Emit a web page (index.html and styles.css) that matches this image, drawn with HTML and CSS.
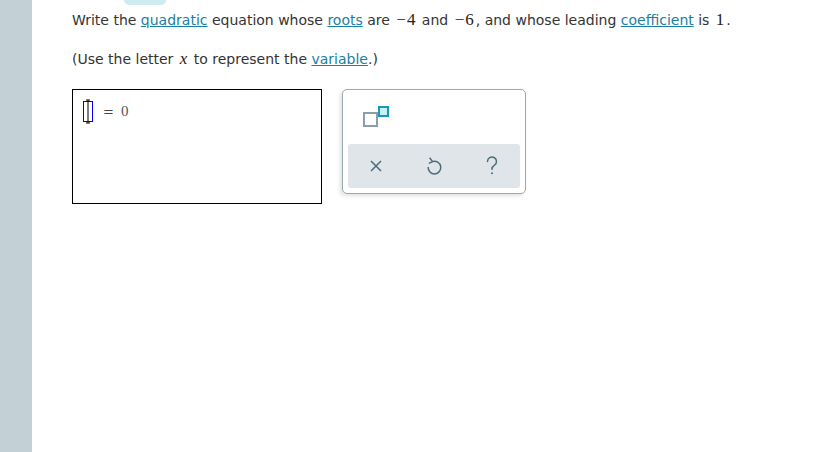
FILE: index.html
```html
<!DOCTYPE html>
<html>
<head>
<meta charset="utf-8">
<link rel="stylesheet" href="styles.css">
</head>
<body>
<div class="page">
  <aside class="side"></aside>
  <main class="main">
    <div class="tab"></div>
    <p class="q">Write the <a href="#">quadratic</a> equation whose <a href="#">roots</a> are <span class="m">−4</span> and <span class="m">−6</span>, and whose leading <a href="#">coefficient</a> is <span class="m">1</span>.</p>
    <p class="q q2">(Use the letter <span class="m mi">x</span> to represent the <a href="#">variable</a>.)</p>
    <div class="answer">
      <div class="input">
        <svg class="caret" width="12" height="26" viewBox="0 0 12 26">
          <rect x="1.5" y="3.5" width="9" height="20" fill="none" stroke="#0000ff" stroke-width="1"/>
          <path d="M6 2v23M4 2h4M4 25h4" stroke="#000" stroke-width="1" fill="none"/>
        </svg>
        <span class="eq">= <span class="zero">0</span></span>
      </div>
      <div class="palette">
        <div class="tools">
          <svg width="28" height="24" viewBox="0 0 28 24">
            <rect x="2" y="8" width="13" height="13" fill="#fff" stroke="#8a9ea6" stroke-width="2"/>
            <rect x="17" y="2" width="9" height="9" fill="#c9eef5" stroke="#1798b3" stroke-width="2"/>
          </svg>
        </div>
        <div class="bar">
          <button class="btn" aria-label="Clear"><svg width="14" height="14" viewBox="0 0 14 14"><path d="M2 2L12 12M12 2L2 12" stroke="#4e6c77" stroke-width="1.5" fill="none"/></svg></button>
          <button class="btn" aria-label="Undo"><svg width="18" height="20" viewBox="0 0 18 20"><path d="M7.5 5.6 A6.3 6.3 0 1 1 3.2 11" stroke="#4e6c77" stroke-width="1.5" fill="none"/><path d="M4.6 1.8L7.6 5.6L3.8 7.4" stroke="#4e6c77" stroke-width="1.5" fill="none" stroke-linejoin="round"/></svg></button>
          <button class="btn" aria-label="Help"><svg width="16" height="22" viewBox="0 0 16 22"><path d="M3.5 6.5 A4.5 4.5 0 1 1 10.5 10.2 C8.8 11.2 8 12 8 14.2" stroke="#4e6c77" stroke-width="1.5" fill="none" stroke-linecap="round"/><circle cx="8" cy="18.2" r="1" fill="#4e6c77"/></svg></button>
        </div>
      </div>
    </div>
  </main>
</div>
</body>
</html>
```

FILE: styles.css
```css
html, body {
  margin: 0;
  padding: 0;
  background: #fff;
}
.page {
  display: flex;
  width: 823px;
  height: 452px;
}
.side {
  width: 32px;
  flex: none;
  background: #c3d0d5;
}
.main {
  flex: 1;
  padding-left: 40px;
  font-family: "DejaVu Sans", Verdana, sans-serif;
  font-size: 14px;
  color: #333;
}
.tab {
  width: 42px;
  height: 5px;
  margin-left: 52px;
  background: #cdebf1;
  border-radius: 0 0 6px 6px;
}
.q {
  margin: 7px 0 0;
  line-height: 16px;
  white-space: nowrap;
}
.q2 {
  margin-top: 23px;
}
.q a {
  color: #17819e;
  text-decoration: underline;
}
.m {
  font-family: "Liberation Serif", "Times New Roman", serif;
  font-size: 17px;
  letter-spacing: 1px;
  padding: 0 1px 0 2px;
  color: #222;
}
.mi {
  font-style: italic;
}
.answer {
  display: flex;
  align-items: flex-start;
  gap: 20px;
  margin-top: 22px;
}
.input {
  box-sizing: border-box;
  width: 250px;
  height: 115px;
  border: 1px solid #000;
  display: flex;
  align-items: flex-start;
  padding: 8px 0 0 9px;
}
.caret {
  display: block;
}
.eq {
  margin: 5px 0 0 9px;
  font-family: "DejaVu Sans", sans-serif;
  font-size: 13px;
  color: #444;
  word-spacing: 3px;
}
.zero {
  font-family: "Liberation Serif", serif;
  font-size: 15px;
  color: #555;
}
.palette {
  box-sizing: border-box;
  width: 184px;
  height: 105px;
  border: 1px solid #98a9af;
  border-radius: 5px;
  box-shadow: -2px 2px 4px rgba(0, 0, 0, 0.12);
  padding: 0 5px 5px;
  display: flex;
  flex-direction: column;
}
.tools {
  height: 54px;
  padding: 15px 0 0 14px;
  box-sizing: border-box;
}
.tools svg {
  display: block;
}
.bar {
  flex: 1;
  background: #dfe5e8;
  border-radius: 3px;
  display: flex;
  align-items: center;
  justify-content: space-between;
  padding: 0 16px;
}
.btn {
  border: 0;
  background: none;
  padding: 0;
  width: 24px;
  height: 24px;
  display: flex;
  align-items: center;
  justify-content: center;
}
```
